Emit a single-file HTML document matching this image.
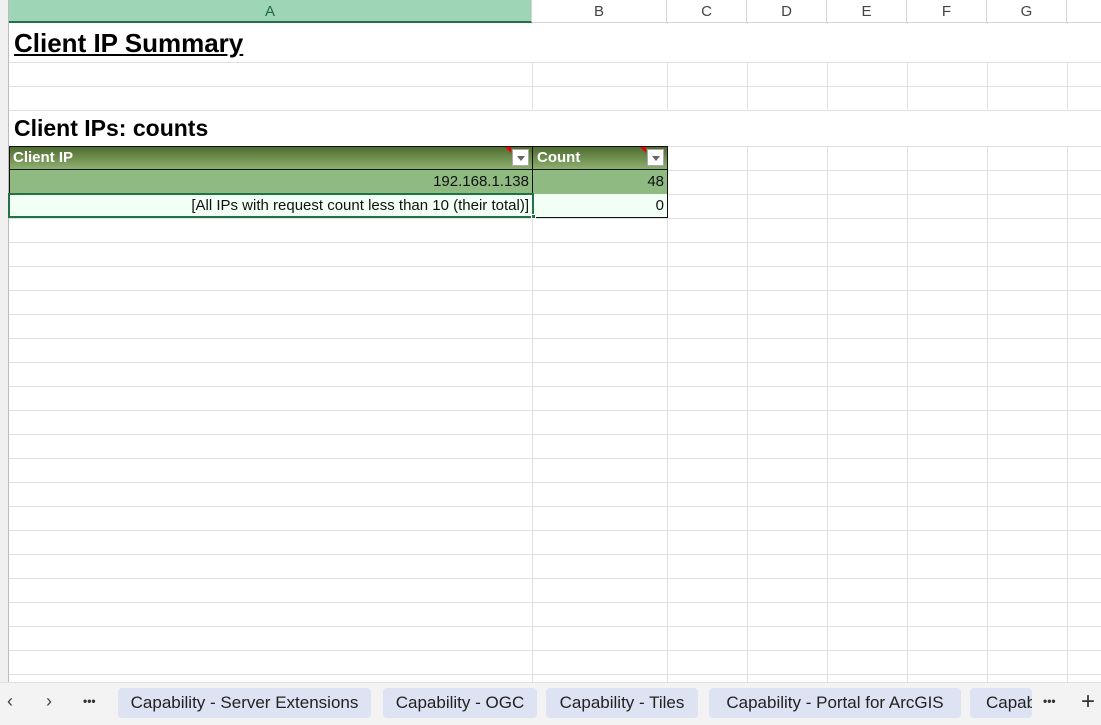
<!DOCTYPE html>
<html><head><meta charset="utf-8"><style>
*{margin:0;padding:0;box-sizing:border-box}
body{width:1101px;height:725px;overflow:hidden;background:#fff;font-family:"Liberation Sans",Calibri,sans-serif;position:relative}
.abs{position:absolute}
.hl{position:absolute;left:9px;width:1092px;height:1px;background:#e1e1e1}
.vl{position:absolute;top:23px;width:1px;height:659px;background:#e1e1e1}
.ch{position:absolute;top:0;height:23px;border-right:1px solid #d4d4d4;border-bottom:1px solid #d4d4d4;background:#fff;color:#444;font-size:15px;text-align:center;line-height:23px}
.tab{position:absolute;top:688px;height:30px;background:#dde3f3;border-radius:4px;font-size:17px;color:#222;line-height:30px;text-align:center}
.dd{position:absolute;width:17px;height:17px;background:#fff;border:1px solid #aaa}
.dd:after{content:"";position:absolute;left:4px;top:6px;border-left:4px solid transparent;border-right:4px solid transparent;border-top:5px solid #666}
</style></head><body>
<div class="abs" style="left:0;top:0;width:9px;height:682px;background:#f0f0f0;border-right:1px solid #bbb"></div>
<div class="ch" style="left:9px;width:523px;background:#9fd5b7;color:#1e6b3e;border-bottom:2px solid #217346">A</div>
<div class="ch" style="left:532px;width:135px">B</div>
<div class="ch" style="left:667px;width:80px">C</div>
<div class="ch" style="left:747px;width:80px">D</div>
<div class="ch" style="left:827px;width:80px">E</div>
<div class="ch" style="left:907px;width:80px">F</div>
<div class="ch" style="left:987px;width:80px">G</div>
<div class="ch" style="left:1067px;width:40px"></div>
<!-- grid -->
<div class="hl" style="top:62px"></div><div class="hl" style="top:86px"></div><div class="hl" style="top:110px"></div><div class="hl" style="top:146px"></div><div class="hl" style="top:170px"></div><div class="hl" style="top:194px"></div><div class="hl" style="top:218px"></div>
<div class="hl" style="top:242px"></div><div class="hl" style="top:266px"></div><div class="hl" style="top:290px"></div><div class="hl" style="top:314px"></div><div class="hl" style="top:338px"></div><div class="hl" style="top:362px"></div><div class="hl" style="top:386px"></div><div class="hl" style="top:410px"></div><div class="hl" style="top:434px"></div><div class="hl" style="top:458px"></div><div class="hl" style="top:482px"></div><div class="hl" style="top:506px"></div><div class="hl" style="top:530px"></div><div class="hl" style="top:554px"></div><div class="hl" style="top:578px"></div><div class="hl" style="top:602px"></div><div class="hl" style="top:626px"></div><div class="hl" style="top:650px"></div><div class="hl" style="top:674px"></div>
<div class="vl" style="left:532px"></div><div class="vl" style="left:667px"></div><div class="vl" style="left:747px"></div><div class="vl" style="left:827px"></div><div class="vl" style="left:907px"></div><div class="vl" style="left:987px"></div><div class="vl" style="left:1067px"></div>
<!-- white cover for title rows -->
<div class="abs" style="left:10px;top:24px;width:1091px;height:38px;background:#fff"></div>
<div class="abs" style="left:10px;top:111px;width:1091px;height:35px;background:#fff"></div>
<div class="abs" style="left:14px;top:28px;font-size:26px;font-weight:bold;text-decoration:underline;color:#000">Client IP Summary</div>
<div class="abs" style="left:14px;top:115px;font-size:23px;font-weight:bold;color:#000">Client IPs: counts</div>
<!-- table -->
<div class="abs" style="left:9px;top:146px;width:659px;height:24px;background:linear-gradient(#4f6b33,#6f8f4f 50%,#8db070);border:1px solid #111"></div>
<div class="abs" style="left:532px;top:146px;width:1px;height:24px;background:#111"></div>
<div class="abs" style="left:13px;top:149px;font-size:15px;font-weight:bold;color:#fff">Client IP</div>
<div class="abs" style="left:537px;top:149px;font-size:15px;font-weight:bold;color:#fff">Count</div>
<div class="dd" style="left:512px;top:149px"></div>
<div class="dd" style="left:647px;top:149px"></div>
<div class="abs" style="left:505px;top:147px;border-left:6px solid transparent;border-top:6px solid #e00"></div>
<div class="abs" style="left:640px;top:147px;border-left:6px solid transparent;border-top:6px solid #e00"></div>
<div class="abs" style="left:9px;top:170px;width:659px;height:24px;background:#8fbb82;border-left:1px solid #111;border-right:1px solid #111"></div>
<div class="abs" style="left:532px;top:170px;width:1px;height:48px;background:#111"></div>
<div class="abs" style="left:9px;top:173px;width:520px;text-align:right;font-size:15px;color:#111">192.168.1.138</div>
<div class="abs" style="left:533px;top:173px;width:131px;text-align:right;font-size:15px;color:#111">48</div>
<div class="abs" style="left:9px;top:194px;width:659px;height:24px;background:#f2fff5;border:1px solid #111;border-top:none"></div>
<div class="abs" style="left:8px;top:193px;width:526px;height:25px;border:2px solid #217346"></div>
<div class="abs" style="left:531px;top:214px;width:5px;height:5px;background:#217346;border:1px solid #fff"></div>
<div class="abs" style="left:9px;top:197px;width:520px;text-align:right;font-size:15px;color:#111">[All IPs with request count less than 10 (their total)]</div>
<div class="abs" style="left:533px;top:197px;width:131px;text-align:right;font-size:15px;color:#111">0</div>
<!-- tab bar -->
<div class="abs" style="left:0;top:682px;width:1101px;height:43px;background:#f3f3f3;border-top:1px solid #e0e0e0"></div>
<div class="abs" style="left:7px;top:691px;font-size:18px;color:#444">&#8249;</div>
<div class="abs" style="left:46px;top:691px;font-size:18px;color:#444">&#8250;</div>
<div class="abs" style="left:83px;top:694px;font-size:12px;color:#333;font-weight:bold">•••</div>
<div class="tab" style="left:118px;width:253px">Capability - Server Extensions</div>
<div class="tab" style="left:383px;width:154px">Capability - OGC</div>
<div class="tab" style="left:546px;width:152px">Capability - Tiles</div>
<div class="tab" style="left:709px;width:252px">Capability - Portal for ArcGIS</div>
<div class="tab" style="left:970px;width:62px;text-align:left;padding-left:16px;overflow:hidden;white-space:nowrap">Capability</div>
<div class="abs" style="left:1043px;top:694px;font-size:12px;color:#333;font-weight:bold">•••</div>
<div class="abs" style="left:1081px;top:688px;font-size:24px;color:#333">+</div>
</body></html>
